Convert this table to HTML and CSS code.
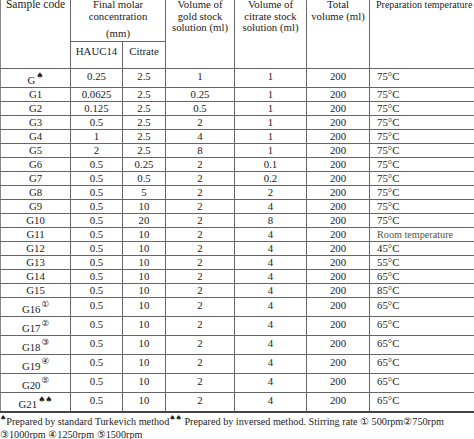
FILE: index.html
```html
<!DOCTYPE html>
<html>
<head>
<meta charset="utf-8">
<link rel="stylesheet" href="styles.css">
</head>
<body>
<div class="page">
<table class="tbl">
<colgroup>
<col class="c1"><col class="c2"><col class="c3"><col class="c4"><col class="c5"><col class="c6"><col class="c7">
</colgroup>
<thead>
<tr class="h1">
<th rowspan="2" class="sample">Sample code</th>
<th colspan="2"><div>Final molar<br>concentration</div><div class="mm">(mm)</div></th>
<th rowspan="2">Volume of<br>gold stock<br>solution (ml)</th>
<th rowspan="2">Volume of<br>citrate stock<br>solution (ml)</th>
<th rowspan="2">Total<br>volume (ml)</th>
<th rowspan="2" class="left prep">Preparation temperature</th>
</tr>
<tr class="h2">
<th class="sub">HAUC14</th>
<th class="sub">Citrate</th>
</tr>
</thead>
<tbody>
<tr class="tall r19"><td class="lab">G<sup class="sp">♠</sup></td><td>0.25</td><td>2.5</td><td>1</td><td>1</td><td>200</td><td class="left">75°C</td></tr>
<tr><td>G1</td><td>0.0625</td><td>2.5</td><td>0.25</td><td>1</td><td>200</td><td class="left">75°C</td></tr>
<tr><td>G2</td><td>0.125</td><td>2.5</td><td>0.5</td><td>1</td><td>200</td><td class="left">75°C</td></tr>
<tr><td>G3</td><td>0.5</td><td>2.5</td><td>2</td><td>1</td><td>200</td><td class="left">75°C</td></tr>
<tr><td>G4</td><td>1</td><td>2.5</td><td>4</td><td>1</td><td>200</td><td class="left">75°C</td></tr>
<tr><td>G5</td><td>2</td><td>2.5</td><td>8</td><td>1</td><td>200</td><td class="left">75°C</td></tr>
<tr><td>G6</td><td>0.5</td><td>0.25</td><td>2</td><td>0.1</td><td>200</td><td class="left">75°C</td></tr>
<tr><td>G7</td><td>0.5</td><td>0.5</td><td>2</td><td>0.2</td><td>200</td><td class="left">75°C</td></tr>
<tr><td>G8</td><td>0.5</td><td>5</td><td>2</td><td>2</td><td>200</td><td class="left">75°C</td></tr>
<tr><td>G9</td><td>0.5</td><td>10</td><td>2</td><td>4</td><td>200</td><td class="left">75°C</td></tr>
<tr><td>G10</td><td>0.5</td><td>20</td><td>2</td><td>8</td><td>200</td><td class="left">75°C</td></tr>
<tr><td>G11</td><td>0.5</td><td>10</td><td>2</td><td>4</td><td>200</td><td class="left room">Room temperature</td></tr>
<tr><td>G12</td><td>0.5</td><td>10</td><td>2</td><td>4</td><td>200</td><td class="left">45°C</td></tr>
<tr><td>G13</td><td>0.5</td><td>10</td><td>2</td><td>4</td><td>200</td><td class="left">55°C</td></tr>
<tr><td>G14</td><td>0.5</td><td>10</td><td>2</td><td>4</td><td>200</td><td class="left">65°C</td></tr>
<tr><td>G15</td><td>0.5</td><td>10</td><td>2</td><td>4</td><td>200</td><td class="left">85°C</td></tr>
<tr class="tall r18"><td class="lab">G16<sup class="ci">①</sup></td><td>0.5</td><td>10</td><td>2</td><td>4</td><td>200</td><td class="left">65°C</td></tr>
<tr class="tall r18"><td class="lab">G17<sup class="ci">②</sup></td><td>0.5</td><td>10</td><td>2</td><td>4</td><td>200</td><td class="left">65°C</td></tr>
<tr class="tall r19"><td class="lab">G18<sup class="ci">③</sup></td><td>0.5</td><td>10</td><td>2</td><td>4</td><td>200</td><td class="left">65°C</td></tr>
<tr class="tall r18"><td class="lab">G19<sup class="ci">④</sup></td><td>0.5</td><td>10</td><td>2</td><td>4</td><td>200</td><td class="left">65°C</td></tr>
<tr class="tall r18"><td class="lab">G20<sup class="ci">⑤</sup></td><td>0.5</td><td>10</td><td>2</td><td>4</td><td>200</td><td class="left">65°C</td></tr>
<tr class="tall r19 last"><td class="lab">G21<sup class="sp">♠♠</sup></td><td>0.5</td><td>10</td><td>2</td><td>4</td><td>200</td><td class="left">65°C</td></tr>
</tbody>
</table>
<p class="note"><sup class="nsp">♠</sup>Prepared by standard Turkevich method<sup class="nsp">♠♠</sup> Prepared by inversed method. Stirring rate ① 500rpm②750rpm<br>③1000rpm ④1250rpm ⑤1500rpm</p>
</div>
</body>
</html>
```

FILE: styles.css
```css
html, body {
  margin: 0;
  padding: 0;
  background: #fff;
}
body {
  width: 474px;
  height: 439px;
  overflow: hidden;
}
.page {
  font-family: "Liberation Serif", "Times New Roman", "DejaVu Serif", serif;
  color: #222;
}
.tbl {
  border-collapse: collapse;
  table-layout: fixed;
  width: 489px;
  margin-top: -2px;
  font-size: 10.8px;
}
.c1 { width: 70px; }
.c2 { width: 52px; }
.c3 { width: 43px; }
.c4 { width: 69px; }
.c5 { width: 72px; }
.c6 { width: 63px; }
.c7 { width: 120px; }
th, td {
  border: 1px solid #666;
  padding: 0;
  text-align: center;
  font-weight: normal;
}
.tbl tr > :first-child {
  border-left: 1px solid #888;
}
th {
  vertical-align: top;
  line-height: 11.5px;
  padding-top: 0;
}
.h1 th { height: 42px; }
.h2 th { height: 23px; }
th.sample { font-size: 11.5px; }
th.prep { font-size: 10px; }
th.sub { padding-top: 3px; line-height: 12px; }
.mm { margin-top: 6px; }
.left { text-align: left; padding-left: 7px; }
th.left { padding-left: 6px; }
td {
  height: 13px;
  line-height: 13px;
  vertical-align: middle;
}
tr.tall td {
  vertical-align: top;
  line-height: 14px;
  padding-top: 0;
}
tr.r19 td { height: 18px; }
tr.r18 td { height: 17px; }
tr.tall td.lab {
  padding-top: 4px;
  height: 14px;
}
tr.r18 td.lab { height: 13px; }
sup {
  line-height: 0;
  vertical-align: baseline;
  position: relative;
}
sup.sp {
  font-size: 8px;
  top: -6px;
  margin-left: 1px;
  font-family: "DejaVu Sans", sans-serif;
}
sup.ci {
  font-size: 8.5px;
  top: -6px;
  margin-left: 1px;
  font-family: "DejaVu Sans", sans-serif;
}
tr.last td {
  border-bottom: 2px solid #444;
}
.room {
  color: #55553a;
  font-size: 10.2px;
}
.note {
  margin: 2px 0 0 0;
  font-size: 10.2px;
  line-height: 13px;
  white-space: nowrap;
}
.nsp {
  font-size: 7px;
  top: -5px;
  font-family: "DejaVu Sans", sans-serif;
}
```
